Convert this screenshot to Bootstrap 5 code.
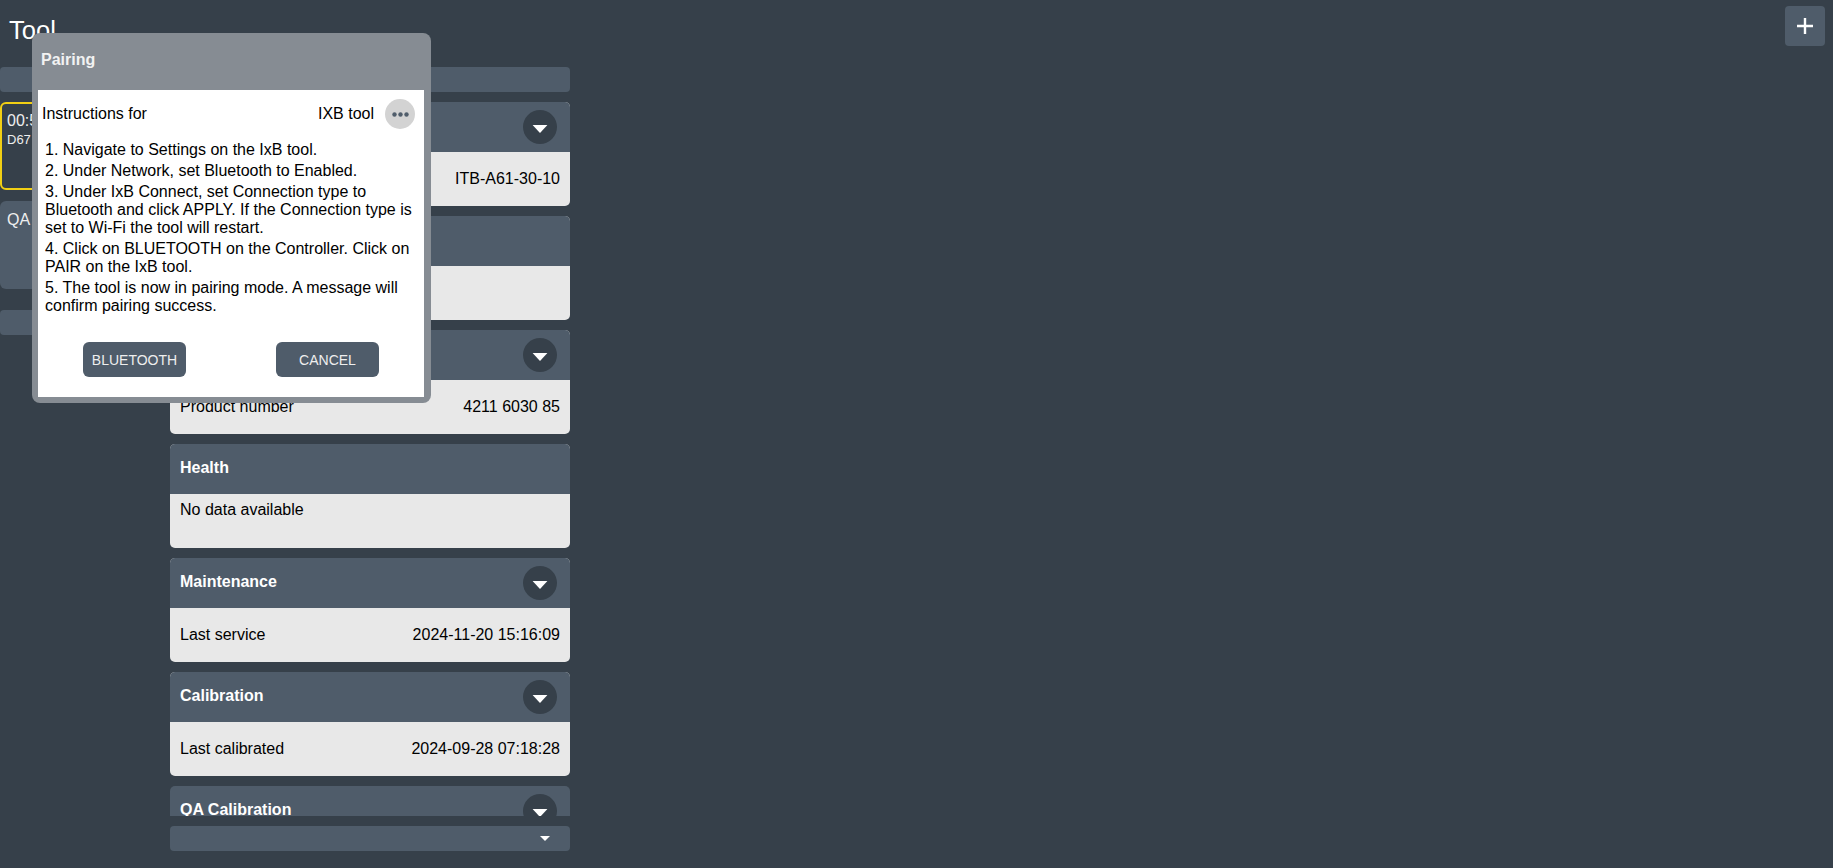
<!DOCTYPE html>
<html lang="en">
<head>
  <meta charset="UTF-8">
  <meta name="viewport" content="width=device-width, initial-scale=1.0">
  <title>Tool</title>
  <link href="https://cdn.jsdelivr.net/npm/bootstrap@5.3.3/dist/css/bootstrap.min.css" rel="stylesheet">
  <style>
    html, body { height: 100%; }
    body { margin: 0; background: #36404a; color: #000; font-family: "Liberation Sans", Arial, sans-serif; font-size: 16px; overflow: hidden; }
    .page-head { height: 67px; }
    .page-title { font-size: 25.6px; font-weight: 400; color: #fff; line-height: 28px; margin: 16px 0 0 9px; }
    .add-btn { width: 40px; height: 40px; margin: 6px 8px 0 0; padding: 0; background: #4f5c6a; border: 0; border-radius: 4px; display: flex; align-items: center; justify-content: center; }
    .side-col { width: 160px; }
    .main-col { width: 400px; margin-left: 10px; }
    .slim-bar { height: 25px; background: #4f5c6a; border-radius: 4px; }
    .tool-tile { height: 88px; border-radius: 6px; padding: 6px 7px; color: #eee; }
    .tool-tile.active { border: 2px solid #f2cf14; padding: 5px; margin-top: 10px; }
    .tool-tile.plain { background: #4f5c6a; margin-top: 11px; padding-top: 7px; }
    .tile-time { line-height: 24px; }
    .tile-id { font-size: 13px; line-height: 14px; }
    .low-bar { margin-top: 21px; }
    .card-scroll { height: 714px; margin-top: 10px; overflow: hidden; gap: 10px; }
    .info-card { border: 0; border-radius: 5px; overflow: hidden; background: #e8e8e8; }
    .info-head { height: 50px; background: #4f5c6a; padding: 0 13px 0 10px; color: #fff; font-weight: 700; display: flex; justify-content: space-between; }
    .info-head span { line-height: 47px; }
    .info-toggle { width: 34px; height: 34px; margin-top: 8px; padding-top: 3px; border-radius: 50%; background: #36404a; display: flex; align-items: center; justify-content: center; }
    .info-body { height: 54px; padding: 0 10px; display: flex; align-items: center; justify-content: space-between; }
    .info-body.empty { align-items: flex-start; padding-top: 4px; }
    .foot-bar { margin-top: 10px; display: flex; align-items: center; justify-content: flex-end; padding-right: 20px; }
    .pairing-box { position: absolute; left: 32px; top: 33px; width: 399px; height: 370px; padding: 0 7px 6px 6px; background: #868c93; border-radius: 8px; display: flex; flex-direction: column; }
    .pairing-title { height: 57px; flex: none; padding: 18px 0 0 3px; line-height: 18px; color: #f2f2f2; font-weight: 700; }
    .pairing-inner { flex: 1; background: #fff; padding: 9px 9px 0 4px; }
    .more-btn { width: 30px; height: 30px; margin-left: 11px; border-radius: 50%; background: #d3d3d3; display: flex; align-items: center; justify-content: center; }
    .steps { margin: 12px 0 0 3px; line-height: 18px; }
    .steps div { margin-bottom: 3px; }
    .pairing-actions { margin: 27px -9px 0 -4px; }
    .pair-btn { width: 103px; height: 35px; padding: 1px 0 0; background: #4f5c6a; border: 0; border-radius: 6px; color: #eee; font-size: 14px; line-height: 34px; }
    .pair-btn:hover { background: #4f5c6a; color: #eee; }
  </style>
</head>
<body>
  <!-- Title row -->
  <div class="page-head d-flex justify-content-between align-items-start">
    <h1 class="page-title">Tool</h1>
    <button class="add-btn" type="button" aria-label="Add">
      <svg width="16" height="16" viewBox="0 0 16 16"><path d="M8 0v16M0 8h16" stroke="#fff" stroke-width="2.4"/></svg>
    </button>
  </div>

  <div class="d-flex">
    <!-- Tools column -->
    <div class="side-col">
      <div class="slim-bar"></div>
      <div class="tool-tile active">
        <div class="tile-time">00:5</div>
        <div class="tile-id">D67</div>
      </div>
      <div class="tool-tile plain">QA</div>
      <div class="slim-bar low-bar"></div>
    </div>

    <!-- Details column -->
    <div class="main-col">
      <div class="slim-bar"></div>
      <div class="card-scroll d-flex flex-column">
        <div class="card info-card flex-shrink-0">
          <div class="info-head"><span></span><div class="info-toggle"><svg width="16" height="8" viewBox="0 0 16 8"><path d="M.6 0h14.8L8 8z" fill="#fff"/></svg></div></div>
          <div class="info-body"><span></span><span>ITB-A61-30-10</span></div>
        </div>
        <div class="card info-card flex-shrink-0">
          <div class="info-head"><span></span></div>
          <div class="info-body empty"></div>
        </div>
        <div class="card info-card flex-shrink-0">
          <div class="info-head"><span></span><div class="info-toggle"><svg width="16" height="8" viewBox="0 0 16 8"><path d="M.6 0h14.8L8 8z" fill="#fff"/></svg></div></div>
          <div class="info-body"><span>Product number</span><span>4211 6030 85</span></div>
        </div>
        <div class="card info-card flex-shrink-0">
          <div class="info-head"><span>Health</span></div>
          <div class="info-body empty"><span>No data available</span></div>
        </div>
        <div class="card info-card flex-shrink-0">
          <div class="info-head"><span>Maintenance</span><div class="info-toggle"><svg width="16" height="8" viewBox="0 0 16 8"><path d="M.6 0h14.8L8 8z" fill="#fff"/></svg></div></div>
          <div class="info-body"><span>Last service</span><span>2024-11-20 15:16:09</span></div>
        </div>
        <div class="card info-card flex-shrink-0">
          <div class="info-head"><span>Calibration</span><div class="info-toggle"><svg width="16" height="8" viewBox="0 0 16 8"><path d="M.6 0h14.8L8 8z" fill="#fff"/></svg></div></div>
          <div class="info-body"><span>Last calibrated</span><span>2024-09-28 07:18:28</span></div>
        </div>
        <div class="card info-card flex-shrink-0">
          <div class="info-head"><span>QA Calibration</span><div class="info-toggle"><svg width="16" height="8" viewBox="0 0 16 8"><path d="M.6 0h14.8L8 8z" fill="#fff"/></svg></div></div>
        </div>
      </div>
      <div class="slim-bar foot-bar"><svg width="10" height="5" viewBox="0 0 10 5"><path d="M0 0h10L5 5z" fill="#fff"/></svg></div>
    </div>
  </div>

  <!-- Pairing dialog -->
  <div class="pairing-box">
    <div class="pairing-title">Pairing</div>
    <div class="pairing-inner">
      <div class="d-flex align-items-center">
        <span class="flex-grow-1">Instructions for</span>
        <span>IXB tool</span>
        <div class="more-btn"><svg width="17" height="5" viewBox="0 0 17 5" fill="#505d6b"><circle cx="2.5" cy="2.5" r="2.2"/><circle cx="8.5" cy="2.5" r="2.2"/><circle cx="14.5" cy="2.5" r="2.2"/></svg></div>
      </div>
      <div class="steps">
        <div>1. Navigate to Settings on the IxB tool.</div>
        <div>2. Under Network, set Bluetooth to Enabled.</div>
        <div>3. Under IxB Connect, set Connection type to Bluetooth and click APPLY. If the Connection type is set to Wi-Fi the tool will restart.</div>
        <div>4. Click on BLUETOOTH on the Controller. Click on PAIR on the IxB tool.</div>
        <div>5. The tool is now in pairing mode. A message will confirm pairing success.</div>
      </div>
      <div class="pairing-actions d-flex justify-content-around">
        <button class="btn pair-btn" type="button">BLUETOOTH</button>
        <button class="btn pair-btn" type="button">CANCEL</button>
      </div>
    </div>
  </div>

  <script src="https://cdn.jsdelivr.net/npm/bootstrap@5.3.3/dist/js/bootstrap.bundle.min.js"></script>
</body>
</html>
